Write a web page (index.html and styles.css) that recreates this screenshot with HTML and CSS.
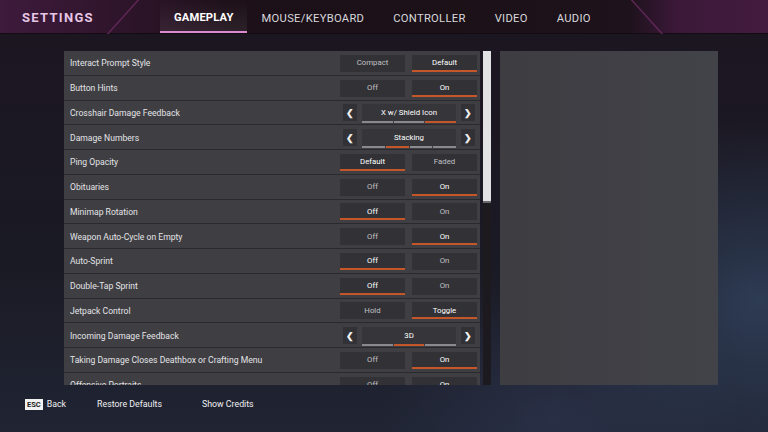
FILE: index.html
```html
<!DOCTYPE html>
<html>
<head>
<meta charset="utf-8">
<link rel="stylesheet" href="styles.css">
</head>
<body>
<div class="screen">
  <header class="topbar">
    <div class="title">SETTINGS</div>
    <span class="slash slash-left"></span>
    <nav class="tabs">
      <div class="tab active">GAMEPLAY</div>
      <div class="tab">MOUSE/KEYBOARD</div>
      <div class="tab">CONTROLLER</div>
      <div class="tab">VIDEO</div>
      <div class="tab">AUDIO</div>
    </nav>
    <span class="slash slash-right"></span>
  </header>

  <main class="content">
    <section class="list">
      <div class="row"><span class="label">Interact Prompt Style</span>
        <div class="toggle"><div class="opt">Compact</div><div class="opt sel">Default</div></div></div>
      <div class="row"><span class="label">Button Hints</span>
        <div class="toggle"><div class="opt">Off</div><div class="opt sel">On</div></div></div>
      <div class="row"><span class="label">Crosshair Damage Feedback</span>
        <div class="carousel"><div class="arrow">&#x276E;</div><div class="value">X w/ Shield Icon<div class="segs"><i></i><i></i><i class="on"></i></div></div><div class="arrow">&#x276F;</div></div></div>
      <div class="row"><span class="label">Damage Numbers</span>
        <div class="carousel"><div class="arrow">&#x276E;</div><div class="value">Stacking<div class="segs"><i></i><i class="on"></i><i></i><i></i></div></div><div class="arrow">&#x276F;</div></div></div>
      <div class="row"><span class="label">Ping Opacity</span>
        <div class="toggle"><div class="opt sel">Default</div><div class="opt">Faded</div></div></div>
      <div class="row"><span class="label">Obituaries</span>
        <div class="toggle"><div class="opt">Off</div><div class="opt sel">On</div></div></div>
      <div class="row"><span class="label">Minimap Rotation</span>
        <div class="toggle"><div class="opt sel">Off</div><div class="opt">On</div></div></div>
      <div class="row"><span class="label">Weapon Auto-Cycle on Empty</span>
        <div class="toggle"><div class="opt">Off</div><div class="opt sel">On</div></div></div>
      <div class="row"><span class="label">Auto-Sprint</span>
        <div class="toggle"><div class="opt sel">Off</div><div class="opt">On</div></div></div>
      <div class="row"><span class="label">Double-Tap Sprint</span>
        <div class="toggle"><div class="opt sel">Off</div><div class="opt">On</div></div></div>
      <div class="row"><span class="label">Jetpack Control</span>
        <div class="toggle"><div class="opt">Hold</div><div class="opt sel">Toggle</div></div></div>
      <div class="row"><span class="label">Incoming Damage Feedback</span>
        <div class="carousel"><div class="arrow">&#x276E;</div><div class="value">3D<div class="segs"><i></i><i class="on"></i><i></i></div></div><div class="arrow">&#x276F;</div></div></div>
      <div class="row"><span class="label">Taking Damage Closes Deathbox or Crafting Menu</span>
        <div class="toggle"><div class="opt">Off</div><div class="opt sel">On</div></div></div>
      <div class="row"><span class="label">Offensive Portraits</span>
        <div class="toggle"><div class="opt">Off</div><div class="opt sel">On</div></div></div>
    </section>
    <div class="scrollbar"><div class="thumb"></div></div>
    <aside class="detail"></aside>
  </main>

  <footer class="footer">
    <div class="fitem back"><span class="key">ESC</span>Back</div>
    <div class="fitem restore">Restore Defaults</div>
    <div class="fitem credits">Show Credits</div>
  </footer>
</div>
</body>
</html>
```
FILE: styles.css
```css
* { box-sizing: border-box; }
html, body { margin: 0; padding: 0; }
body {
  width: 768px; height: 432px; overflow: hidden;
  font-family: Roboto, "Liberation Sans", sans-serif;
  background: #14131b;
}
.screen {
  width: 768px; height: 432px;
  display: flex; flex-direction: column;
  background:
    radial-gradient(ellipse 300px 260px at 760px 300px, rgba(60,85,120,0.55), rgba(0,0,0,0) 70%),
    radial-gradient(ellipse 260px 200px at 560px 420px, rgba(50,60,90,0.5), rgba(0,0,0,0) 70%),
    linear-gradient(180deg, #1c1520 0%, #1a1a24 60%, #202433 100%);
}
.topbar {
  position: relative;
  height: 34px; flex: none;
  display: flex; align-items: stretch;
  background: linear-gradient(90deg, #3e1a3c 0%, #2c1428 18%, #1d1019 30%, #1b1117 60%, #1e121c 82%, #3b1838 88%, #431c40 100%);
  border-bottom: 1px solid #120c12;
}
.title {
  width: 140px; padding-left: 22px; padding-top: 2px;
  display: flex; align-items: center;
  font-weight: 700; font-size: 13px; letter-spacing: 1.3px;
  color: #e6c6e4;
}
.slash {
  position: absolute; top: 0; width: 2px; height: 34px;
  background: #6a2a62; opacity: 0.8;
}
.slash-left { left: 122px; transform: skewX(-42deg); }
.slash-right { left: 646px; transform: skewX(42deg); }
.tabs {
  display: flex; align-items: stretch; padding-left: 20px;
}
.tab {
  display: flex; align-items: center; padding-top: 3px;
  font-size: 11.2px; color: #d8d8dc; letter-spacing: 0.3px;
  margin-right: 29px;
}
.tab.active {
  color: #ffffff; font-weight: 700; letter-spacing: 0.15px;
  padding: 3px 13px 0 14px; margin-right: 15px;
  background: linear-gradient(180deg, rgba(255,255,255,0) 0%, rgba(255,255,255,0.07) 100%);
  border-bottom: 2px solid #d98ad0;
}
.content {
  flex: none;
  display: flex; align-items: flex-start;
  padding: 17px 0 0 64px;
  height: 352px;
}
.list {
  width: 416px; height: 334px; overflow: hidden;
  background: #2b2b30;
}
.row {
  height: 24.75px;
  display: flex; align-items: center; justify-content: space-between;
  background: #3e3e43;
  border-bottom: 1px solid #2a2a2e;
  padding: 1px 3px 0 6px;
}
.label {
  font-size: 8.6px; color: #e4e4e6;
}
.toggle { display: flex; gap: 7px; }
.opt {
  width: 65px; height: 17px;
  display: flex; align-items: center; justify-content: center;
  background: #323236;
  font-size: 7.8px; color: #c0c0c4;
  border-bottom: 2px solid transparent;
  padding-top: 1px;
}
.opt.sel {
  color: #ffffff;
  border-bottom: 2px solid #c4562a;
}
.carousel { display: flex; align-items: center; gap: 5px; margin-right: 2px; }
.arrow {
  width: 14px; height: 17px;
  display: flex; align-items: center; justify-content: center;
  background: #323236; color: #f0f0f0; font-size: 9px; font-weight: 700;
}
.value {
  position: relative;
  width: 94px; height: 17px;
  display: flex; align-items: center; justify-content: center;
  background: #36363a;
  font-size: 7.8px; color: #ffffff;
}
.segs {
  position: absolute; left: 0; right: 0; bottom: -2px; height: 2px;
  display: flex; gap: 1px;
}
.segs i { flex: 1; background: #8a8a8e; }
.segs i.on { background: #c4562a; }
.scrollbar {
  width: 8px; height: 334px; margin-left: 3px;
  background: #1c1a1f;
}
.thumb { height: 152px; background: #e2e2e4; border-bottom: 2px solid #6a6a6e; }
.detail {
  width: 218px; height: 334px; margin-left: 9px;
  background: linear-gradient(90deg, #3d3d42, #424249);
}
.footer {
  flex: none; height: 46px;
  display: flex; align-items: center;
  padding-left: 25px; padding-bottom: 10px;
}
.fitem {
  font-size: 8.8px; color: #f0f0f0;
  display: flex; align-items: center;
}
.restore { margin-left: 31px; }
.credits { margin-left: 40px; }
.key {
  background: #f2f2f2; color: #222; font-weight: 700; font-size: 7.5px;
  padding: 1px 2px; margin-right: 4px;
}
```
